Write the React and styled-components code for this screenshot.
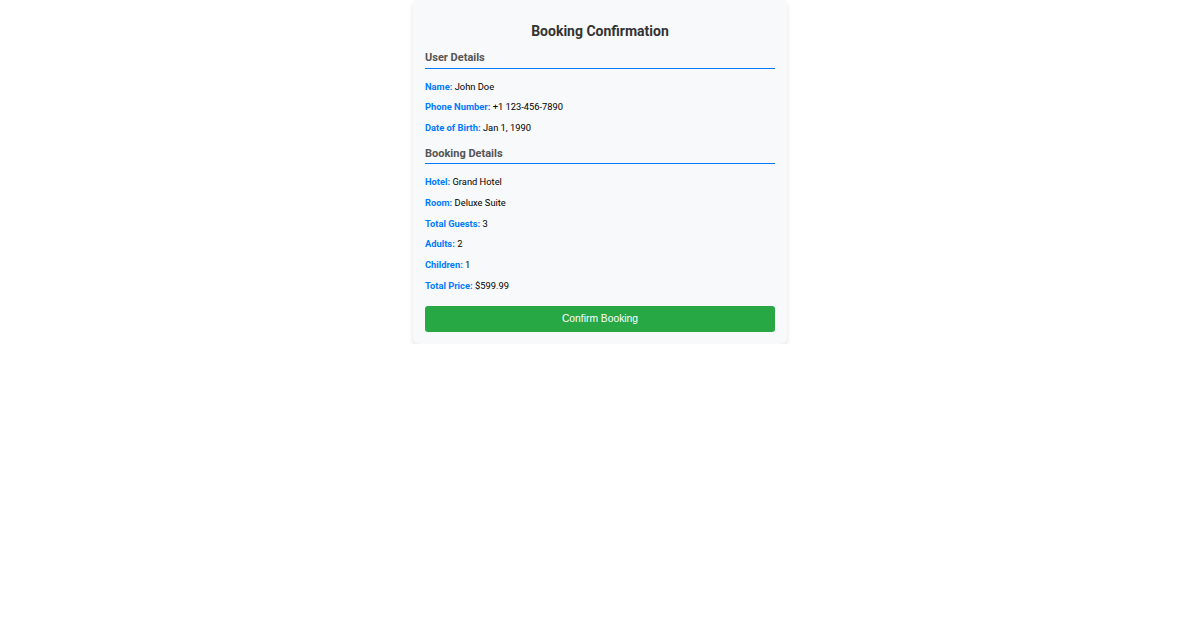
import React from 'react';
import styled, { createGlobalStyle } from 'styled-components';

const GlobalStyle = createGlobalStyle`
	body {
		margin: 0;
		background: #fff;
		font-family: Roboto, "Liberation Sans", Arial, sans-serif;
	}
`;

const Card = styled.div`
	width: 350px;
	margin: 0 auto;
	padding: 12px;
	background: #f8f9fa;
	border-radius: 6px;
	box-shadow: 0 2px 5px rgba(0, 0, 0, 0.12);
`;

const Title = styled.h2`
	margin: 10px 0 11px;
	font-size: 14px;
	line-height: 18px;
	font-weight: 700;
	text-align: center;
	color: #333;
`;

const Section = styled.section`
	& + & {
		margin-top: 12.5px;
	}
`;

const SectionTitle = styled.h3`
	margin: 0;
	padding-bottom: 3.5px;
	border-bottom: 1px solid #007bff;
	font-size: 11px;
	line-height: 13px;
	font-weight: 700;
	color: #555;
`;

const List = styled.div`
	display: flex;
	flex-direction: column;
	gap: 8.8px;
	margin-top: 12px;
`;

const Row = styled.p`
	margin: 0;
	font-size: 9.33px;
	line-height: 12px;
	color: #000;

	strong {
		color: #007bff;
		font-weight: 700;
	}
`;

const ConfirmButton = styled.button`
	display: block;
	width: 100%;
	height: 26px;
	margin-top: 13.5px;
	border: none;
	border-radius: 3px;
	background: #28a745;
	color: #fff;
	font-family: "Liberation Sans", Arial, sans-serif;
	font-size: 10.3px;
	cursor: pointer;
`;

const userDetails = [
	['Name', 'John Doe'],
	['Phone Number', '+1 123-456-7890'],
	['Date of Birth', 'Jan 1, 1990'],
];

const bookingDetails = [
	['Hotel', 'Grand Hotel'],
	['Room', 'Deluxe Suite'],
	['Total Guests', '3'],
	['Adults', '2'],
	['Children', '1'],
	['Total Price', '$599.99'],
];

const DetailSection = ({ title, items }) => (
	<Section>
		<SectionTitle>{title}</SectionTitle>
		<List>
			{items.map(([label, value]) => (
				<Row key={label}>
					<strong>{label}:</strong> {value}
				</Row>
			))}
		</List>
	</Section>
);

export default function App() {
	return (
		<>
			<GlobalStyle />
			<Card>
				<Title>Booking Confirmation</Title>
				<DetailSection title='User Details' items={userDetails} />
				<DetailSection title='Booking Details' items={bookingDetails} />
				<ConfirmButton>Confirm Booking</ConfirmButton>
			</Card>
		</>
	);
}
